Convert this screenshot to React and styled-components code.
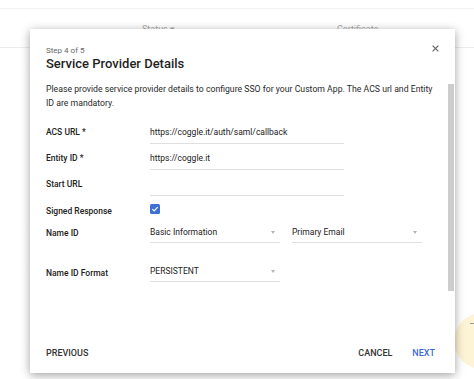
import React from 'react'
import styled, { createGlobalStyle } from 'styled-components'

const Global = createGlobalStyle`
  html, body {
    margin: 0;
    padding: 0;
    background: #fff;
    overflow: hidden;
  }
  body {
    font-family: Roboto, "Liberation Sans", Arial, sans-serif;
  }
`

const Page = styled.div`
  position: relative;
  width: 474px;
  height: 379px;
  overflow: hidden;
  background: #fff;
`

const Table = styled.div`
  padding-top: 8px;
`

const HeaderRow = styled.div`
  display: flex;
  align-items: center;
  height: 38px;
  border-top: 1px solid #f3f3f3;
  border-bottom: 1px solid #ececec;
  padding-left: 142px;
  font-size: 9px;
  color: #aaa;
`

const HeaderCell = styled.div`
  width: ${p => p.$w}px;
  padding-top: 1px;
`

const Blob = styled.div`
  position: absolute;
  left: 454px;
  top: 313px;
  width: 56px;
  height: 56px;
  border-radius: 50%;
  background: #fcf4d4;

  &::after {
    content: '';
    position: absolute;
    left: 16px;
    top: 10px;
    width: 5px;
    height: 1px;
    background: #9a9a9a;
  }
`

const Modal = styled.div`
  position: absolute;
  left: 30px;
  top: 29px;
  width: 425px;
  height: 344px;
  background: #fff;
  box-shadow: 0 2px 9px rgba(0, 0, 0, 0.38);
  display: flex;
  flex-direction: column;
  color: #222;
`

const Thumb = styled.div`
  position: absolute;
  left: 418px;
  top: 55px;
  width: 6px;
  height: 207px;
  background: #cdcdcd;
`

const Header = styled.div`
  padding: 17px 16px 0 16px;
`

const HeaderTop = styled.div`
  display: flex;
  justify-content: space-between;
  align-items: flex-start;
  height: 10px;
`

const Step = styled.div`
  font-size: 8px;
  line-height: 10px;
  color: #666;
`

const Close = styled.svg`
  margin-top: -1px;
  width: 7px;
  height: 7px;
`

const Title = styled.h2`
  margin: 0;
  font-size: 13px;
  line-height: 16px;
  font-weight: 500;
  color: #1f1f1f;
`

const Description = styled.p`
  margin: 10px 20px 0 16px;
  font-size: 8.7px;
  line-height: 14px;
  color: #2a2a2a;
`

const Form = styled.div`
  margin: 12px 0 0 16px;
  display: flex;
  flex-direction: column;
`

const Row = styled.div`
  display: flex;
  align-items: flex-start;
  height: ${p => p.$h}px;
  margin-top: ${p => p.$mt || 0}px;
`

const Label = styled.div`
  width: 104px;
  flex: none;
  font-size: 8.5px;
  font-weight: 500;
  line-height: ${p => p.$lh || 21}px;
  padding-top: ${p => p.$pt || 0}px;
  color: #222;
`

const Input = styled.div`
  width: 194px;
  height: 21px;
  line-height: 21px;
  font-size: 8.5px;
  color: #222;
  border-bottom: 1.5px solid #e0e0e0;
  box-sizing: content-box;
`

const Selects = styled.div`
  display: flex;
  gap: 12px;
`

const Select = styled.div`
  width: 130px;
  height: 20px;
  line-height: 20px;
  font-size: 8.5px;
  color: #222;
  border-bottom: 1.5px solid #e0e0e0;
  display: flex;
  justify-content: space-between;
  align-items: center;
`

const Arrow = styled.span`
  width: 0;
  height: 0;
  margin-right: 5px;
  border-left: 2.5px solid transparent;
  border-right: 2.5px solid transparent;
  border-top: 3px solid #b5b5b5;
`

const Checkbox = styled.div`
  margin-top: 4px;
  width: 10px;
  height: 10px;
  border-radius: 1.5px;
  background: #3d6fd6;
  display: flex;
  align-items: center;
  justify-content: center;
`

const Spacer = styled.div`
  flex: 1;
`

const Footer = styled.div`
  display: flex;
  align-items: center;
  padding: 0 20px 13px 16px;
  gap: 20px;
`

const Button = styled.button`
  border: 0;
  background: none;
  padding: 0;
  font-family: inherit;
  font-size: 9px;
  font-weight: 500;
  line-height: 14px;
  color: ${p => (p.$primary ? '#3e6ccf' : '#333')};
  margin-right: ${p => (p.$push ? 'auto' : '0')};
`

const fields = [
  { label: 'ACS URL *', value: 'https://coggle.it/auth/saml/callback' },
  { label: 'Entity ID *', value: 'https://coggle.it' },
  { label: 'Start URL', value: '' },
]

export default function App() {
  return (
    <Page>
      <Global />
      <Table>
        <HeaderRow>
          <HeaderCell $w={195}>Status ▾</HeaderCell>
          <HeaderCell $w={100}>Certificate</HeaderCell>
        </HeaderRow>
      </Table>
      <Blob />
      <Modal>
        <Header>
          <HeaderTop>
            <Step>Step 4 of 5</Step>
            <Close viewBox="0 0 7 7">
              <path d="M0.6 0.6 L6.4 6.4 M6.4 0.6 L0.6 6.4" stroke="#666" strokeWidth="1.2" />
            </Close>
          </HeaderTop>
          <Title>Service Provider Details</Title>
        </Header>
        <Description>
          Please provide service provider details to configure SSO for your Custom App. The ACS url and Entity
          ID are mandatory.
        </Description>
        <Form>
          {fields.map(f => (
            <Row key={f.label} $h={26}>
              <Label>{f.label}</Label>
              <Input>{f.value}</Input>
            </Row>
          ))}
          <Row $h={22}>
            <Label $lh={22}>Signed Response</Label>
            <Checkbox>
              <svg width="8" height="8" viewBox="0 0 8 8">
                <path d="M1.4 4.2 L3.2 6 L6.7 2.2" fill="none" stroke="#fff" strokeWidth="1.2" />
              </svg>
            </Checkbox>
          </Row>
          <Row $h={22}>
            <Label $lh={20} $pt={1}>Name ID</Label>
            <Selects>
              <Select>Basic Information<Arrow /></Select>
              <Select>Primary Email<Arrow /></Select>
            </Selects>
          </Row>
          <Row $h={22} $mt={17}>
            <Label $lh={20} $pt={2}>Name ID Format</Label>
            <Select>PERSISTENT<Arrow /></Select>
          </Row>
        </Form>
        <Spacer />
        <Footer>
          <Button $push>PREVIOUS</Button>
          <Button>CANCEL</Button>
          <Button $primary>NEXT</Button>
        </Footer>
        <Thumb />
      </Modal>
    </Page>
  )
}
